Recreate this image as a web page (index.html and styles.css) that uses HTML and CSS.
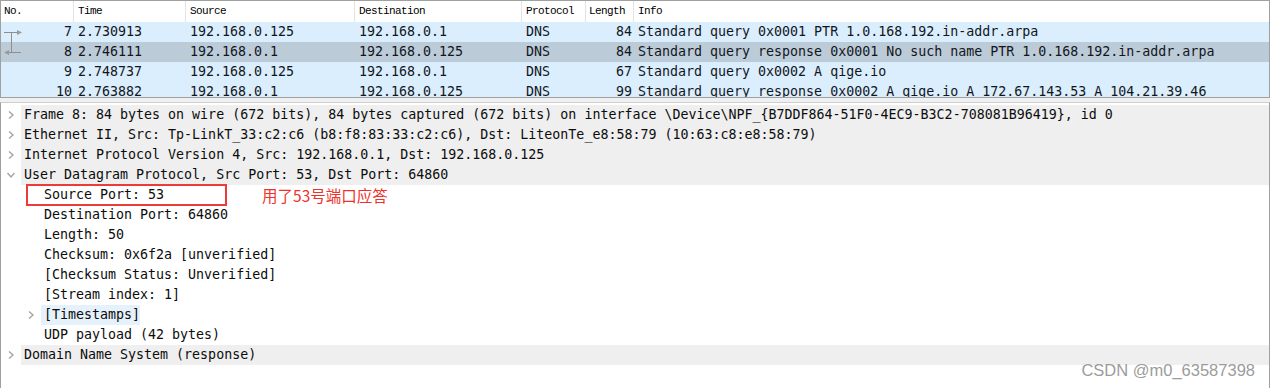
FILE: index.html
```html
<!DOCTYPE html>
<html>
<head>
<meta charset="utf-8">
<link rel="stylesheet" href="styles.css">
</head>
<body>
<div class="app">
  <div class="plist">
    <div class="prow head">
      <div class="c no">No.</div>
      <div class="c">Time</div>
      <div class="c">Source</div>
      <div class="c">Destination</div>
      <div class="c">Protocol</div>
      <div class="c len">Length</div>
      <div class="c info">Info</div>
    </div>
    <div class="prow pkt">
      <div class="c no">7</div>
      <div class="c">2.730913</div>
      <div class="c">192.168.0.125</div>
      <div class="c">192.168.0.1</div>
      <div class="c">DNS</div>
      <div class="c len">84</div>
      <div class="c info">Standard query 0x0001 PTR 1.0.168.192.in-addr.arpa</div>
    </div>
    <div class="prow pkt sel">
      <div class="c no">8</div>
      <div class="c">2.746111</div>
      <div class="c">192.168.0.1</div>
      <div class="c">192.168.0.125</div>
      <div class="c">DNS</div>
      <div class="c len">84</div>
      <div class="c info">Standard query response 0x0001 No such name PTR 1.0.168.192.in-addr.arpa</div>
    </div>
    <div class="prow pkt">
      <div class="c no">9</div>
      <div class="c">2.748737</div>
      <div class="c">192.168.0.125</div>
      <div class="c">192.168.0.1</div>
      <div class="c">DNS</div>
      <div class="c len">67</div>
      <div class="c info">Standard query 0x0002 A qige.io</div>
    </div>
    <div class="prow pkt">
      <div class="c no">10</div>
      <div class="c">2.763882</div>
      <div class="c">192.168.0.1</div>
      <div class="c">192.168.0.125</div>
      <div class="c">DNS</div>
      <div class="c len">99</div>
      <div class="c info">Standard query response 0x0002 A qige.io A 172.67.143.53 A 104.21.39.46</div>
    </div>
    <svg class="related" width="24" height="40" viewBox="0 0 24 40">
      <path d="M3 10.5H17M10.5 10.5V30.5M8 30.5H20" stroke="#8e8e8e" stroke-width="1" fill="none"/>
      <path d="M16 8L21 10.5L16 13Z" fill="#9a9a9a"/>
      <path d="M8 28L3 30.5L8 33Z" fill="#9a9a9a"/>
    </svg>
  </div>
  <div class="splitter"></div>
  <div class="tree">
    <div class="node top"><span class="tw"><svg class="chev" viewBox="0 0 8 10" width="8" height="10"><path d="M2 1.5L6 5L2 8.5" /></svg></span><span class="lbl">Frame 8: 84 bytes on wire (672 bits), 84 bytes captured (672 bits) on interface \Device\NPF_{B7DDF864-51F0-4EC9-B3C2-708081B96419}, id 0</span></div>
    <div class="node top"><span class="tw"><svg class="chev" viewBox="0 0 8 10" width="8" height="10"><path d="M2 1.5L6 5L2 8.5" /></svg></span><span class="lbl">Ethernet II, Src: Tp-LinkT_33:c2:c6 (b8:f8:83:33:c2:c6), Dst: LiteonTe_e8:58:79 (10:63:c8:e8:58:79)</span></div>
    <div class="node top"><span class="tw"><svg class="chev" viewBox="0 0 8 10" width="8" height="10"><path d="M2 1.5L6 5L2 8.5" /></svg></span><span class="lbl">Internet Protocol Version 4, Src: 192.168.0.1, Dst: 192.168.0.125</span></div>
    <div class="node top"><span class="tw"><svg class="chev" viewBox="0 0 10 8" width="10" height="8"><path d="M1.5 2L5 6L8.5 2" /></svg></span><span class="lbl">User Datagram Protocol, Src Port: 53, Dst Port: 64860</span></div>
    <div class="node child annotated"><span class="tw"></span><span class="lbl">Source Port: 53</span><span class="note">用了53号端口应答</span><span class="mark"></span></div>
    <div class="node child"><span class="tw"></span><span class="lbl">Destination Port: 64860</span></div>
    <div class="node child"><span class="tw"></span><span class="lbl">Length: 50</span></div>
    <div class="node child"><span class="tw"></span><span class="lbl">Checksum: 0x6f2a [unverified]</span></div>
    <div class="node child"><span class="tw"></span><span class="lbl">[Checksum Status: Unverified]</span></div>
    <div class="node child"><span class="tw"></span><span class="lbl">[Stream index: 1]</span></div>
    <div class="node child hl"><span class="tw"><svg class="chev" viewBox="0 0 8 10" width="8" height="10"><path d="M2 1.5L6 5L2 8.5" /></svg></span><span class="lbl">[Timestamps]</span></div>
    <div class="node child"><span class="tw"></span><span class="lbl">UDP payload (42 bytes)</span></div>
    <div class="node top"><span class="tw"><svg class="chev" viewBox="0 0 8 10" width="8" height="10"><path d="M2 1.5L6 5L2 8.5" /></svg></span><span class="lbl">Domain Name System (response)</span></div>
  </div>
  <div class="watermark">CSDN @m0_63587398</div>
</div>
</body>
</html>
```

FILE: styles.css
```css
* { box-sizing: border-box; }
html, body { margin: 0; padding: 0; background: #fff; }
body { width: 1270px; height: 388px; overflow: hidden; }

.app {
  position: relative;
  width: 1270px;
  height: 388px;
  display: flex;
  flex-direction: column;
}

.plist {
  position: relative;
  height: 98px;
  border: 1px solid #a0a0a0;
  overflow: hidden;
  flex: none;
}

.prow {
  display: grid;
  grid-template-columns: 73px 112px 169px 167px 64px 48px 1fr;
  height: 20px;
  line-height: 20px;
  white-space: nowrap;
}

.prow .c {
  padding-left: 4px;
  overflow: hidden;
}

.prow .c.no, .prow .c.len {
  text-align: right;
  padding-left: 0;
  padding-right: 2px;
}

.head {
  height: 21px;
  line-height: 21px;
  background: #fff;
  font-family: "Liberation Mono", monospace;
  font-size: 11px;
  letter-spacing: -0.6px;
  color: #000;
}
.head .c { border-right: 1px solid #e3e3e3; }
.head .c.info { border-right: none; }
.head .c.no { text-align: left; padding-left: 3px; }
.head .c.len { text-align: left; padding-left: 3px; }

.pkt {
  background: #daeefd;
  font-family: "DejaVu Sans Mono", monospace;
  font-size: 13.3px;
  color: #12161c;
}
.pkt.sel { background: #bccbd8; }

.related {
  position: absolute;
  left: 0;
  top: 21px;
}

.splitter {
  height: 4px;
  background: #f0f0f0;
  flex: none;
}

.tree {
  flex: 1;
  border-top: 1px solid #cfcfcf;
  border-left: 1px solid #a0a0a0;
  border-right: 1px solid #a0a0a0;
  padding-top: 2px;
  font-family: "DejaVu Sans Mono", monospace;
  font-size: 13.3px;
  color: #0c0c0c;
}

.node {
  position: relative;
  display: flex;
  align-items: center;
  height: 20px;
  white-space: nowrap;
}

.node .tw {
  width: 20px;
  flex: none;
  display: flex;
  align-items: center;
  justify-content: center;
  height: 20px;
}
.node.child { padding-left: 20px; }

.node .lbl {
  flex: 1;
  height: 20px;
  line-height: 20px;
  padding-left: 3px;
}
.node.top .lbl { background: #efefef; }
.node.hl .lbl { background: #e5f1fb; }

.node.child .lbl { flex: none; }

.chev {
  display: block;
  fill: none;
  stroke: #a4a4a4;
  stroke-width: 1.4;
}

.note {
  margin-left: 98px;
  font-family: "Noto Sans CJK SC", sans-serif;
  font-size: 15.5px;
  color: #f0302a;
  line-height: 20px;
}

.mark {
  position: absolute;
  left: 25px;
  top: -1px;
  width: 201px;
  height: 22px;
  border: 2px solid #ee3b37;
}

.watermark {
  position: absolute;
  right: 15px;
  bottom: 8px;
  font-family: "Liberation Sans", Arial, sans-serif;
  font-size: 16.5px;
  color: #9c9c9c;
}
```
